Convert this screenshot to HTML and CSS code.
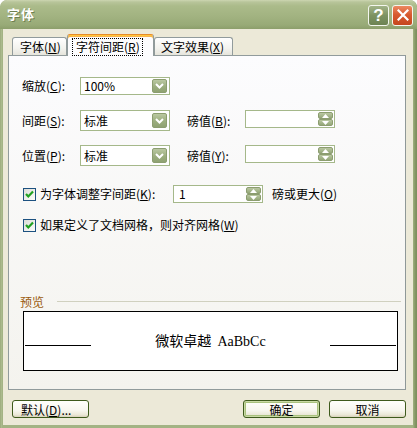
FILE: index.html
```html
<!DOCTYPE html>
<html lang="zh-CN">
<head>
<meta charset="utf-8">
<title>字体</title>
<link rel="stylesheet" href="styles.css">
</head>
<body>
<div class="window">
  <div class="titlebar">
    <span class="title">字体</span>
    <div class="tbtns">
      <div class="tb help">?</div>
      <div class="tb close">
        <svg width="12" height="12" viewBox="0 0 12 12"><path d="M1.5 1.5 L10.5 10.5 M10.5 1.5 L1.5 10.5" stroke="#fff" stroke-width="2.2" stroke-linecap="square"/></svg>
      </div>
    </div>
  </div>
  <div class="client">
    <div class="tabs">
      <div class="tab t1">字体(<u>N</u>)</div>
      <div class="tab sel t2"><span class="focus">字符间距(<u>R</u>)</span></div>
      <div class="tab t3">文字效果(<u>X</u>)</div>
    </div>
    <div class="panel">
      <div class="row r1">
        <span class="lbl">缩放(<u>C</u>):</span>
        <div class="combo small"><span class="val">100%</span><span class="drop"><svg width="9" height="6" viewBox="0 0 9 6"><path d="M1 1 L4.5 4.5 L8 1" fill="none" stroke="#fff" stroke-width="2"/></svg></span></div>
      </div>
      <div class="row r2">
        <span class="lbl">间距(<u>S</u>):</span>
        <div class="combo"><span class="val">标准</span><span class="drop"><svg width="9" height="6" viewBox="0 0 9 6"><path d="M1 1 L4.5 4.5 L8 1" fill="none" stroke="#fff" stroke-width="2"/></svg></span></div>
        <span class="lbl lbl2">磅值(<u>B</u>):</span>
        <div class="spin"><span class="val"></span><span class="spinbtns"><span class="sb"><svg width="7" height="4" viewBox="0 0 7 4"><path d="M0 4 L3.5 0 L7 4 Z" fill="#fff"/></svg></span><span class="sb"><svg width="7" height="4" viewBox="0 0 7 4"><path d="M0 0 L3.5 4 L7 0 Z" fill="#fff"/></svg></span></span></div>
      </div>
      <div class="row r3">
        <span class="lbl">位置(<u>P</u>):</span>
        <div class="combo"><span class="val">标准</span><span class="drop"><svg width="9" height="6" viewBox="0 0 9 6"><path d="M1 1 L4.5 4.5 L8 1" fill="none" stroke="#fff" stroke-width="2"/></svg></span></div>
        <span class="lbl lbl2">磅值(<u>Y</u>):</span>
        <div class="spin"><span class="val"></span><span class="spinbtns"><span class="sb"><svg width="7" height="4" viewBox="0 0 7 4"><path d="M0 4 L3.5 0 L7 4 Z" fill="#fff"/></svg></span><span class="sb"><svg width="7" height="4" viewBox="0 0 7 4"><path d="M0 0 L3.5 4 L7 0 Z" fill="#fff"/></svg></span></span></div>
      </div>
      <div class="chkrow c1">
        <span class="chk"><svg width="11" height="11" viewBox="0 0 11 11"><path d="M2 5 L4.3 7.5 L9 2.5" fill="none" stroke="#21a121" stroke-width="2.2"/></svg></span>
        <span class="chklbl kern">为字体调整字间距(<u>K</u>):</span>
        <div class="spin"><span class="val">1</span><span class="spinbtns"><span class="sb"><svg width="7" height="4" viewBox="0 0 7 4"><path d="M0 4 L3.5 0 L7 4 Z" fill="#fff"/></svg></span><span class="sb"><svg width="7" height="4" viewBox="0 0 7 4"><path d="M0 0 L3.5 4 L7 0 Z" fill="#fff"/></svg></span></span></div>
        <span class="after">磅或更大(<u>O</u>)</span>
      </div>
      <div class="chkrow c2">
        <span class="chk"><svg width="11" height="11" viewBox="0 0 11 11"><path d="M2 5 L4.3 7.5 L9 2.5" fill="none" stroke="#21a121" stroke-width="2.2"/></svg></span>
        <span class="chklbl">如果定义了文档网格，则对齐网格(<u>W</u>)</span>
      </div>
      <div class="phead">
        <span class="ptitle">预览</span>
        <span class="pline"></span>
      </div>
      <div class="preview">
        <span class="bline left"></span>
        <span class="ptext">微软卓越 <span class="latin">AaBbCc</span></span>
        <span class="bline right"></span>
      </div>
    </div>
    <div class="buttons">
      <div class="btn">默认(<u>D</u>)...</div>
      <div class="spacer"></div>
      <div class="btn def">确定</div>
      <div class="btn">取消</div>
    </div>
  </div>
</div>
</body>
</html>
```
FILE: styles.css
```css
* { box-sizing: border-box; }
html, body { margin: 0; padding: 0; background: #ffffff; }
body {
  font-family: "Noto Sans CJK SC", "Liberation Sans", sans-serif;
  font-size: 12px;
  line-height: 14px;
  color: #000;
}
u { text-decoration: underline; text-underline-offset: 1px; }

.window {
  width: 417px;
  height: 428px;
  display: flex;
  flex-direction: column;
  background: linear-gradient(to right, #8d9e6c 0, #b3c196 1px, #a3b384 2px, #a3b384 413px, #93a473 414px, #7f905f 416px);
  border-radius: 7px 7px 0 0;
  overflow: hidden;
}

.titlebar {
  height: 29px;
  flex: none;
  display: flex;
  align-items: center;
  padding: 0 4px 0 7px;
  background: linear-gradient(to bottom, #cdd6b1 0, #b8c59a 2px, #abbb8a 6px, #a2b381 16px, #98aa77 25px, #8c9e6b 29px);
  border-radius: 7px 7px 0 0;
}
.title {
  color: #fff;
  font-weight: bold;
  font-size: 13px;
  letter-spacing: 1px;
  text-shadow: 1px 1px 0 #6f8050;
  flex: 1;
  margin-top: -1px;
}
.tbtns { display: flex; gap: 3px; margin-top: 1px; }
.tb {
  width: 21px;
  height: 21px;
  border: 1px solid #f4f6ee;
  border-radius: 3px;
  display: flex;
  align-items: center;
  justify-content: center;
  color: #fff;
}
.help {
  background: linear-gradient(to bottom, #a2b388, #7d9262 50%, #6d8352);
  font-family: "Liberation Sans", sans-serif;
  font-weight: bold;
  font-size: 17px;
  line-height: 19px;
}
.close {
  background: linear-gradient(to bottom, #ec8a62, #d85a2f 45%, #c5461d);
}

.client {
  flex: 1;
  margin: 0 4px 3px 3px;
  background: #ece9d8;
  display: flex;
  flex-direction: column;
}

.tabs {
  display: flex;
  align-items: flex-end;
  height: 22px;
  margin-top: 5px;
  margin-bottom: -1px;
  padding-left: 9px;
  position: relative;
  z-index: 1;
}
.tab {
  height: 18px;
  margin-bottom: 1px;
  border: 1px solid #919b9c;
  border-bottom: none;
  border-radius: 3px 3px 0 0;
  background: linear-gradient(to bottom, #ffffff, #f3f3ef 60%, #e6e5dc);
  display: flex;
  align-items: center;
  padding-left: 7px;
  padding-top: 1px;
}
.t1 { width: 55px; }
.t2 { width: 87px; }
.t3 { width: 79px; padding-left: 6px; }
.tab.sel {
  height: 22px;
  margin-bottom: 0;
  border-top: 1px solid #e68b2c;
  box-shadow: inset 0 1px 0 #ffc73c, inset 0 2px 0 #f8b350;
  background: #fcfcfe;
  padding-left: 5px;
  padding-top: 2px;
}
.focus {
  outline: 1px dotted #000;
  outline-offset: 0;
  padding: 1px 2px 1px 3px;
  line-height: 14px;
}

.panel {
  margin-left: 5px;
  width: 398px;
  height: 335px;
  flex: none;
  border: 1px solid #919b9c;
  border-right-color: #8f9898;
  background: linear-gradient(to bottom, #fcfcfe, #f4f3ee);
  padding: 21px 0 0 13px;
  display: flex;
  flex-direction: column;
}

.row { display: flex; align-items: center; height: 21px; }
.r1 { height: 18px; }
.r2 { margin-top: 15px; }
.r3 { margin-top: 14px; }
.lbl { width: 58px; flex: none; }
.lbl2 { margin-left: 17px; }

.combo {
  width: 90px;
  height: 100%;
  border: 1px solid #a5b88a;
  background: #fff;
  display: flex;
  align-items: stretch;
  padding: 2px 2px 2px 3px;
}
.combo .val { flex: 1; display: flex; align-items: center; }
.combo.small .val { padding-left: 0; }
.drop {
  width: 15px;
  border-radius: 2px;
  background: linear-gradient(to bottom, #bac8a2, #9cae7f 55%, #8fa272);
  border: 1px solid #8c9d70;
  display: flex;
  align-items: center;
  justify-content: center;
}
.combo.small .drop { margin: -1px 0; }

.spin {
  width: 90px;
  height: 18px;
  align-self: flex-start;
  border: 1px solid #a5b88a;
  background: #fff;
  display: flex;
  padding: 1px 1px 1px 3px;
}
.spin .val { flex: 1; display: flex; align-items: center; padding-left: 2px; }
.spinbtns { width: 15px; display: flex; flex-direction: column; gap: 0; }
.sb {
  flex: 1;
  border-radius: 2px;
  background: linear-gradient(to bottom, #b9c7a1, #94a778);
  border: 1px solid #8c9d70;
  display: flex;
  align-items: center;
  justify-content: center;
}

.chkrow { display: flex; align-items: center; height: 18px; }
.c1 { margin-top: 19px; }
.c2 { margin-top: 13px; }
.chk {
  width: 13px;
  height: 13px;
  margin-left: 1px;
  border: 1px solid #1c5180;
  background: linear-gradient(135deg, #dcdcd7, #fdfdfb);
  display: flex;
  align-items: center;
  justify-content: center;
  flex: none;
}
.chklbl { margin-left: 4px; }
.kern { width: 133px; flex: none; }
.after { margin-left: 9px; }

.phead {
  display: flex;
  align-items: center;
  height: 15px;
  margin-top: 60px;
  margin-left: -2px;
  margin-right: 4px;
}
.ptitle { color: #9a5a0e; }
.pline { flex: 1; height: 1px; background: #d0d0bf; margin-left: 13px; }

.preview {
  margin-top: 2px;
  margin-left: 1px;
  width: 375px;
  height: 60px;
  border: 1px solid #000;
  background: #fff;
  display: flex;
  align-items: flex-start;
}
.bline { width: 66px; height: 1px; background: #000; margin-top: 33px; flex: none; }
.bline.left { margin-left: 1px; }
.bline.right { margin-right: 1px; }
.ptext {
  flex: 1;
  text-align: center;
  font-size: 14px;
  line-height: 14px;
  margin-top: 21px;
  white-space: nowrap;
}
.latin { font-family: "Liberation Serif", serif; font-size: 14px; margin-left: 3px; }

.buttons {
  display: flex;
  margin-top: 10px;
  padding: 0 7px 0 9px;
}
.spacer { flex: 1; }
.btn {
  width: 77px;
  height: 18px;
  border: 1px solid #3e5a1c;
  border-radius: 3px;
  background: linear-gradient(to bottom, #fffffb, #f7f6ee 60%, #ebe8d8 85%, #d8d2ba);
  display: flex;
  align-items: center;
  justify-content: center;
  padding-top: 1px;
}
.btn:first-child { justify-content: flex-start; padding-left: 8px; }
.btn.def {
  box-shadow: inset 0 0 0 1px #c9d9a4, inset 0 0 0 2px #a9c27e;
  margin-right: 9px;
}
```
